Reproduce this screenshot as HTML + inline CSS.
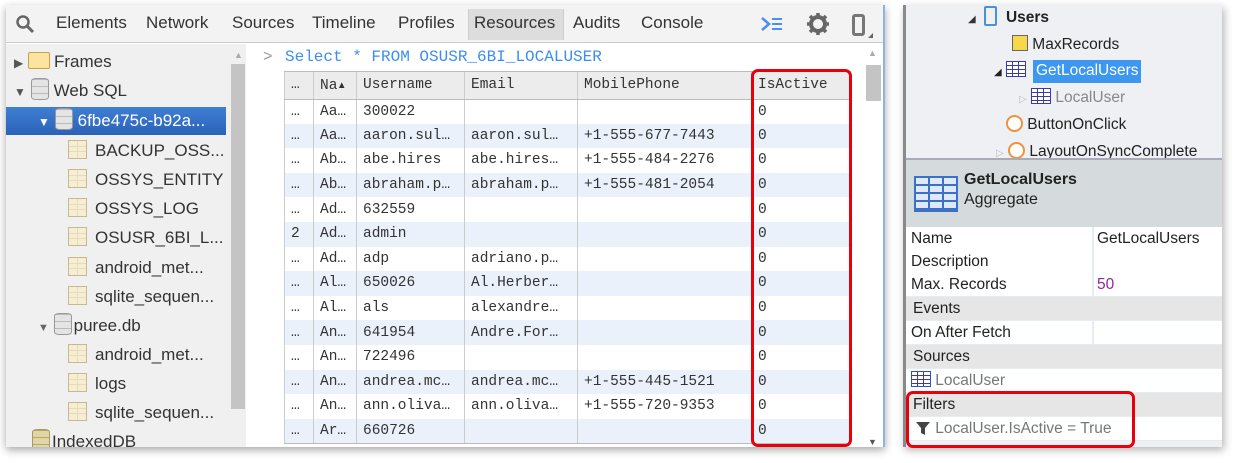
<!DOCTYPE html>
<html><head><meta charset="utf-8"><style>
*{box-sizing:border-box;margin:0;padding:0}
body{width:1236px;height:463px;background:#fff;position:relative;overflow:hidden;font-family:"Segoe UI","Liberation Sans","DejaVu Sans",sans-serif;color:#222}
.a{position:absolute}
.dt{left:6px;top:5px;width:879px;height:442px;background:#fff;box-shadow:0 3px 8px rgba(0,0,0,.35);overflow:hidden}
.tb{left:0;top:0;width:879px;height:38px;background:#f3f3f3;border-bottom:1px solid #ccc;font-size:17px;color:#333}
.tb span{position:absolute;top:8px}
.side{left:0;top:39px;width:240px;height:403px;background:#f0f0f0;border-right:1px solid #ccc;font-size:17px;color:#333}
.ti{position:absolute;white-space:nowrap;height:25px;line-height:25px}
.tbl-ic{display:inline-block;width:19px;height:19px;border:1px solid #c8b88e;background:
linear-gradient(#e8dcb8,#e8dcb8) 0 5px/100% 1px no-repeat,
linear-gradient(#e8dcb8,#e8dcb8) 0 10px/100% 1px no-repeat,
linear-gradient(#e8dcb8,#e8dcb8) 8px 0/1px 100% no-repeat,#f5edd4;vertical-align:-3px;margin-right:8px}
.db{display:inline-block;width:18px;height:22px;border-radius:5px/3px;background:repeating-linear-gradient(#bbb 0 1px,#e4e4e4 1px 7px);border:1px solid #999;vertical-align:-4px;margin-right:5px}
.mono{font-family:"Liberation Mono","DejaVu Sans Mono",monospace}
table{border-collapse:collapse;font-family:"Liberation Mono",monospace;font-size:14.5px;color:#333;table-layout:fixed}
td,th{height:24.6px;padding:0 6px;white-space:nowrap;overflow:hidden;text-align:left;font-weight:normal;border-left:1px solid #ccc}
th{background:#ececec;border-bottom:1px solid #bbb;height:27px}
tr.o td{background:#eaf1fb}
.rp{left:903px;top:5px;width:319px;height:442px;background:#eef0f3;border-left:3px solid #8a8a8a;box-shadow:2px 3px 8px rgba(0,0,0,.3);font-size:15.5px;color:#222;overflow:hidden}
.pr{position:absolute;left:0;width:316px;height:24px;line-height:23px;background:#fff;border-bottom:1px solid #e4ecf4}
.pr .l{position:absolute;left:5px}
.pr .v{position:absolute;left:186px;top:0;height:23px;border-left:2px solid #e4ecf4;padding-left:3px}
.pr.g{background:#e6e6e6}
.grid{display:inline-block;width:20px;height:16px;border:1px solid #3a3aa8;background:
linear-gradient(90deg,transparent 5px,#3a3aa8 5px 6px,transparent 6px 11px,#3a3aa8 11px 12px,transparent 12px),
repeating-linear-gradient(transparent 0 3px,#3a3aa8 3px 4px),#fff;vertical-align:-2px}
.circ{display:inline-block;width:17px;height:17px;border-radius:50%;border:2px solid #f0923a;background:#fff;vertical-align:-3px}
.red{border:3px solid #e8000a;border-radius:7px}
</style></head><body>
<div class="a dt">
 <div class="a tb">
  <svg class="a" style="left:9px;top:9px" width="20" height="20" viewBox="0 0 20 20"><circle cx="8" cy="8" r="5.5" fill="none" stroke="#666" stroke-width="2.5"/><path d="M12 12l6 6" stroke="#666" stroke-width="3"/></svg>
  <span style="left:50px">Elements</span><span style="left:140px">Network</span><span style="left:226px">Sources</span><span style="left:306px">Timeline</span><span style="left:392px">Profiles</span>
  <div class="a" style="left:462px;top:4px;width:96px;height:31px;background:#ddd;border-left:1px solid #ccc;border-right:1px solid #ccc"></div>
  <span style="left:468px">Resources</span><span style="left:567px">Audits</span><span style="left:635px">Console</span>
  <svg class="a" style="left:754px;top:10px" width="24" height="18"><path d="M2 3l7 6-7 6" fill="none" stroke="#4a8ef0" stroke-width="2.5"/><path d="M12 4h10M12 9h10M12 14h10" stroke="#4a8ef0" stroke-width="2"/></svg>
  <svg class="a" style="left:800px;top:7px" width="24" height="24" viewBox="0 0 24 24"><circle cx="12" cy="12" r="7" fill="none" stroke="#666" stroke-width="4"/><path d="M12 1v5M12 18v5M1 12h5M18 12h5M4 4l4 4M16 16l4 4M4 20l4-4M16 8l4-4" stroke="#666" stroke-width="3.5"/><circle cx="12" cy="12" r="3" fill="#f3f3f3"/></svg>
  <div class="a" style="left:846px;top:9px;width:13px;height:22px;border:3px solid #777;border-radius:3px"></div>
  <div class="a" style="left:862px;top:28px;width:0;height:0;border-left:5px solid transparent;border-bottom:5px solid #666"></div>
 </div>
 <div class="a side">
  <div class="ti" style="left:8px;top:5px"><span style="font-size:12px;color:#555">▶</span> <span style="display:inline-block;width:22px;height:17px;background:#fbe3a0;border:1px solid #c9a04a;border-radius:2px;vertical-align:-2px;margin-right:4px"></span>Frames</div>
  <div class="ti" style="left:8px;top:34px"><span style="font-size:12px;color:#555">▼</span> <span class="db"></span>Web SQL</div>
  <div class="a" style="left:0;top:63px;width:220px;height:28px;background:linear-gradient(#3f7fd3,#2a62b8)"></div>
  <div class="ti" style="left:32px;top:64px;color:#fff"><span style="font-size:12px">▼</span> <span class="db"></span>6fbe475c-b92a...</div>
  <div class="ti" style="left:62px;top:94px"><span class="tbl-ic"></span>BACKUP_OSS...</div>
  <div class="ti" style="left:62px;top:123px"><span class="tbl-ic"></span>OSSYS_ENTITY</div>
  <div class="ti" style="left:62px;top:152px"><span class="tbl-ic"></span>OSSYS_LOG</div>
  <div class="ti" style="left:62px;top:181px"><span class="tbl-ic"></span>OSUSR_6BI_L...</div>
  <div class="ti" style="left:62px;top:211px"><span class="tbl-ic"></span>android_met...</div>
  <div class="ti" style="left:62px;top:240px"><span class="tbl-ic"></span>sqlite_sequen...</div>
  <div class="ti" style="left:32px;top:269px"><span style="font-size:11px;color:#666">▼</span> <span class="db" style="margin-right:2px"></span>puree.db</div>
  <div class="ti" style="left:62px;top:298px"><span class="tbl-ic"></span>android_met...</div>
  <div class="ti" style="left:62px;top:327px"><span class="tbl-ic"></span>logs</div>
  <div class="ti" style="left:62px;top:356px"><span class="tbl-ic"></span>sqlite_sequen...</div>
  <div class="ti" style="left:26px;top:385px"><span class="db" style="background:repeating-linear-gradient(#b9a76a 0 1px,#e0d6a8 1px 7px);border-color:#a99a60;margin-right:2px"></span>IndexedDB</div>
  <div class="a" style="left:224px;top:0;width:16px;height:403px;background:#f0f0f0"></div>
  <div class="a" style="left:228px;top:6px;color:#aaa;font-size:9px">▲</div>
  <div class="a" style="left:225px;top:20px;width:14px;height:345px;background:#c4c4c4"></div>
 </div>
 <div class="a mono" style="left:257px;top:43px;font-size:16px;color:#999">&gt;</div>
 <div class="a mono" style="left:279px;top:43px;font-size:16px;color:#3a8ef0;white-space:nowrap">Select * FROM OSUSR_6BI_LOCALUSER</div>
 <div class="a" style="left:278px;top:66px;border:1px solid #bbb;border-left:none">
 <table style="width:565px">
 <colgroup><col style="width:29px"><col style="width:43px"><col style="width:108px"><col style="width:113px"><col style="width:174px"><col style="width:98px"></colgroup>
 <tr><th>…</th><th>Na▴</th><th>Username</th><th>Email</th><th>MobilePhone</th><th>IsActive</th></tr>
 <tr><td>…</td><td>Aa…</td><td>300022</td><td></td><td></td><td>0</td></tr>
 <tr class="o"><td>…</td><td>Aa…</td><td>aaron.sul…</td><td>aaron.sul…</td><td>+1-555-677-7443</td><td>0</td></tr>
 <tr><td>…</td><td>Ab…</td><td>abe.hires</td><td>abe.hires…</td><td>+1-555-484-2276</td><td>0</td></tr>
 <tr class="o"><td>…</td><td>Ab…</td><td>abraham.p…</td><td>abraham.p…</td><td>+1-555-481-2054</td><td>0</td></tr>
 <tr><td>…</td><td>Ad…</td><td>632559</td><td></td><td></td><td>0</td></tr>
 <tr class="o"><td>2</td><td>Ad…</td><td>admin</td><td></td><td></td><td>0</td></tr>
 <tr><td>…</td><td>Ad…</td><td>adp</td><td>adriano.p…</td><td></td><td>0</td></tr>
 <tr class="o"><td>…</td><td>Al…</td><td>650026</td><td>Al.Herber…</td><td></td><td>0</td></tr>
 <tr><td>…</td><td>Al…</td><td>als</td><td>alexandre…</td><td></td><td>0</td></tr>
 <tr class="o"><td>…</td><td>An…</td><td>641954</td><td>Andre.For…</td><td></td><td>0</td></tr>
 <tr><td>…</td><td>An…</td><td>722496</td><td></td><td></td><td>0</td></tr>
 <tr class="o"><td>…</td><td>An…</td><td>andrea.mc…</td><td>andrea.mc…</td><td>+1-555-445-1521</td><td>0</td></tr>
 <tr><td>…</td><td>An…</td><td>ann.oliva…</td><td>ann.oliva…</td><td>+1-555-720-9353</td><td>0</td></tr>
 <tr class="o"><td>…</td><td>Ar…</td><td>660726</td><td></td><td></td><td>0</td></tr>
 </table></div>
 <div class="a" style="left:862px;top:43px;color:#aaa;font-size:9px">▲</div>
 <div class="a" style="left:860px;top:60px;width:15px;height:36px;background:#c4c4c4"></div>
 <div class="a" style="left:862px;top:432px;color:#555;font-size:9px">▼</div>
 <div class="a" style="left:877px;top:0;width:2px;height:442px;background:#8ab4e8"></div>
</div>
<div class="a red" style="left:751px;top:69px;width:101px;height:378px"></div>

<div class="a rp">
 <div class="ti" style="left:62px;top:0"><span style="font-size:10px;color:#333">◢</span> &nbsp;<span style="display:inline-block;width:13px;height:20px;border:2px solid #4a90e2;border-radius:2px;vertical-align:-4px"></span>&nbsp; <b>Users</b></div>
 <div class="ti" style="left:106px;top:27px"><span style="display:inline-block;width:16px;height:16px;background:#f7d84a;border:1px solid #666;vertical-align:-2px"></span> MaxRecords</div>
 <div class="ti" style="left:88px;top:53px"><span style="font-size:10px">◢</span> <span class="grid"></span></div>
 <div class="a" style="left:127px;top:55px;width:108px;height:23px;background:#3b97ef;color:#fff;line-height:22px;padding-left:3px">GetLocalUsers</div>
 <div class="ti" style="left:113px;top:80px;color:#888"><span style="font-size:10px;color:#bbb">▷</span> <span class="grid"></span> LocalUser</div>
 <div class="ti" style="left:100px;top:107px"><span class="circ"></span> ButtonOnClick</div>
 <div class="ti" style="left:90px;top:134px"><span style="font-size:10px;color:#bbb">▷</span> <span class="circ"></span> LayoutOnSyncComplete</div>
 <div class="a" style="left:0;top:153px;width:316px;height:69px;background:#d5dadc;border-top:2px solid #aab"></div>
 <div class="a" style="left:8px;top:171px;width:44px;height:36px;border:2px solid #3a70c8;background:
linear-gradient(90deg,transparent 12px,#3a70c8 12px 14px,transparent 14px 26px,#3a70c8 26px 28px,transparent 28px),
repeating-linear-gradient(#dfe8f5 0 6px,#3a70c8 6px 8px)"></div>
 <div class="a" style="left:58px;top:166px;font-weight:bold;font-size:16px">GetLocalUsers</div>
 <div class="a" style="left:58px;top:186px;font-size:16px">Aggregate</div>
 <div class="pr" style="top:222px"><span class="l">Name</span><span class="v">GetLocalUsers</span></div>
 <div class="pr" style="top:245px"><span class="l">Description</span><span class="v"></span></div>
 <div class="pr" style="top:268px"><span class="l">Max. Records</span><span class="v" style="color:#8a2a9a">50</span></div>
 <div class="pr g" style="top:292px"><span class="l" style="left:7px">Events</span></div>
 <div class="pr" style="top:316px"><span class="l">On After Fetch</span><span class="v"></span></div>
 <div class="pr g" style="top:340px"><span class="l" style="left:7px">Sources</span></div>
 <div class="pr" style="top:364px;color:#777"><span class="l"><span class="grid" style="border-color:#2b4fd0"></span> LocalUser</span></div>
 <div class="pr g" style="top:388px"><span class="l" style="left:7px">Filters</span></div>
 <div class="pr" style="top:412px;color:#777"><span class="l" style="left:9px"><svg width="16" height="16" viewBox="0 0 16 16" style="vertical-align:-3px"><path d="M1 2h14l-5 6v7l-4-2V8z" fill="#444"/></svg> LocalUser.IsActive = True</span></div>
</div>
<div class="a red" style="left:906px;top:391px;width:229px;height:57px"></div>
</body></html>
